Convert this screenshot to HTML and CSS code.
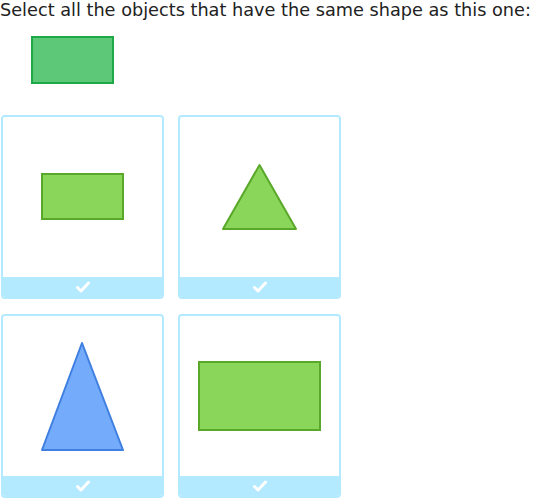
FILE: index.html
```html
<!DOCTYPE html>
<html>
<head>
<meta charset="utf-8">
<link rel="stylesheet" href="styles.css">
</head>
<body>
<div class="page">
  <div class="prompt">Select all the objects that have the same shape as this one:</div>
  <div class="sample">
    <svg width="83" height="48" viewBox="0 0 83 48"><rect x="1" y="1" width="81" height="46" fill="#5cc878" stroke="#1fa846" stroke-width="2"/></svg>
  </div>
  <div class="grid">
    <div class="card">
      <div class="card-body">
        <svg width="83" height="48" viewBox="0 0 83 48"><rect x="1" y="1" width="81" height="45" fill="#8ad65a" stroke="#5aa82a" stroke-width="2"/></svg>
      </div>
      <div class="card-bar"><svg class="check" width="14" height="12" viewBox="0 0 14 12"><path d="M1.5 6.5 L5 10 L12.5 2" fill="none" stroke="#fff" stroke-width="3" stroke-linecap="round" stroke-linejoin="round"/></svg></div>
    </div>
    <div class="card">
      <div class="card-body">
        <svg width="77" height="68" viewBox="0 0 77 68"><polygon points="38.5,2 75,66 2,66" fill="#8ad65a" stroke="#5aa82a" stroke-width="2" stroke-linejoin="round"/></svg>
      </div>
      <div class="card-bar"><svg class="check" width="14" height="12" viewBox="0 0 14 12"><path d="M1.5 6.5 L5 10 L12.5 2" fill="none" stroke="#fff" stroke-width="3" stroke-linecap="round" stroke-linejoin="round"/></svg></div>
    </div>
    <div class="card">
      <div class="card-body">
        <svg width="84" height="111" viewBox="0 0 84 111"><polygon points="41,2 82,109 1,109" fill="#75abfb" stroke="#3f7fe0" stroke-width="2" stroke-linejoin="round"/></svg>
      </div>
      <div class="card-bar"><svg class="check" width="14" height="12" viewBox="0 0 14 12"><path d="M1.5 6.5 L5 10 L12.5 2" fill="none" stroke="#fff" stroke-width="3" stroke-linecap="round" stroke-linejoin="round"/></svg></div>
    </div>
    <div class="card">
      <div class="card-body">
        <svg width="124" height="70" viewBox="0 0 124 70"><rect x="1" y="1" width="121" height="68" fill="#8ad65a" stroke="#5aa82a" stroke-width="2"/></svg>
      </div>
      <div class="card-bar"><svg class="check" width="14" height="12" viewBox="0 0 14 12"><path d="M1.5 6.5 L5 10 L12.5 2" fill="none" stroke="#fff" stroke-width="3" stroke-linecap="round" stroke-linejoin="round"/></svg></div>
    </div>
  </div>
</div>
</body>
</html>
```
FILE: styles.css
```css
html, body {
  margin: 0;
  padding: 0;
  background: #ffffff;
}
.page {
  font-family: "DejaVu Sans", Verdana, sans-serif;
  color: #222;
}
.prompt {
  font-size: 17.7px;
  line-height: 20px;
  white-space: nowrap;
  padding-top: 0;
}
.sample {
  margin-top: 16px;
  margin-left: 31px;
  line-height: 0;
}
.sample svg { display: block; }
.grid {
  display: grid;
  grid-template-columns: 163px 163px;
  grid-auto-rows: 184px;
  column-gap: 14px;
  row-gap: 15px;
  margin-top: 31px;
  margin-left: 1px;
}
.card {
  display: flex;
  flex-direction: column;
  border: 2px solid #b3eaff;
  border-radius: 4px;
  overflow: hidden;
  background: #fff;
}
.card-body {
  flex: 1;
  display: flex;
  align-items: center;
  justify-content: center;
}
.card-body svg { display: block; }
.card-bar {
  height: 20px;
  background: #b3eaff;
  display: flex;
  align-items: center;
  justify-content: center;
}
.check { display: block; }
```
